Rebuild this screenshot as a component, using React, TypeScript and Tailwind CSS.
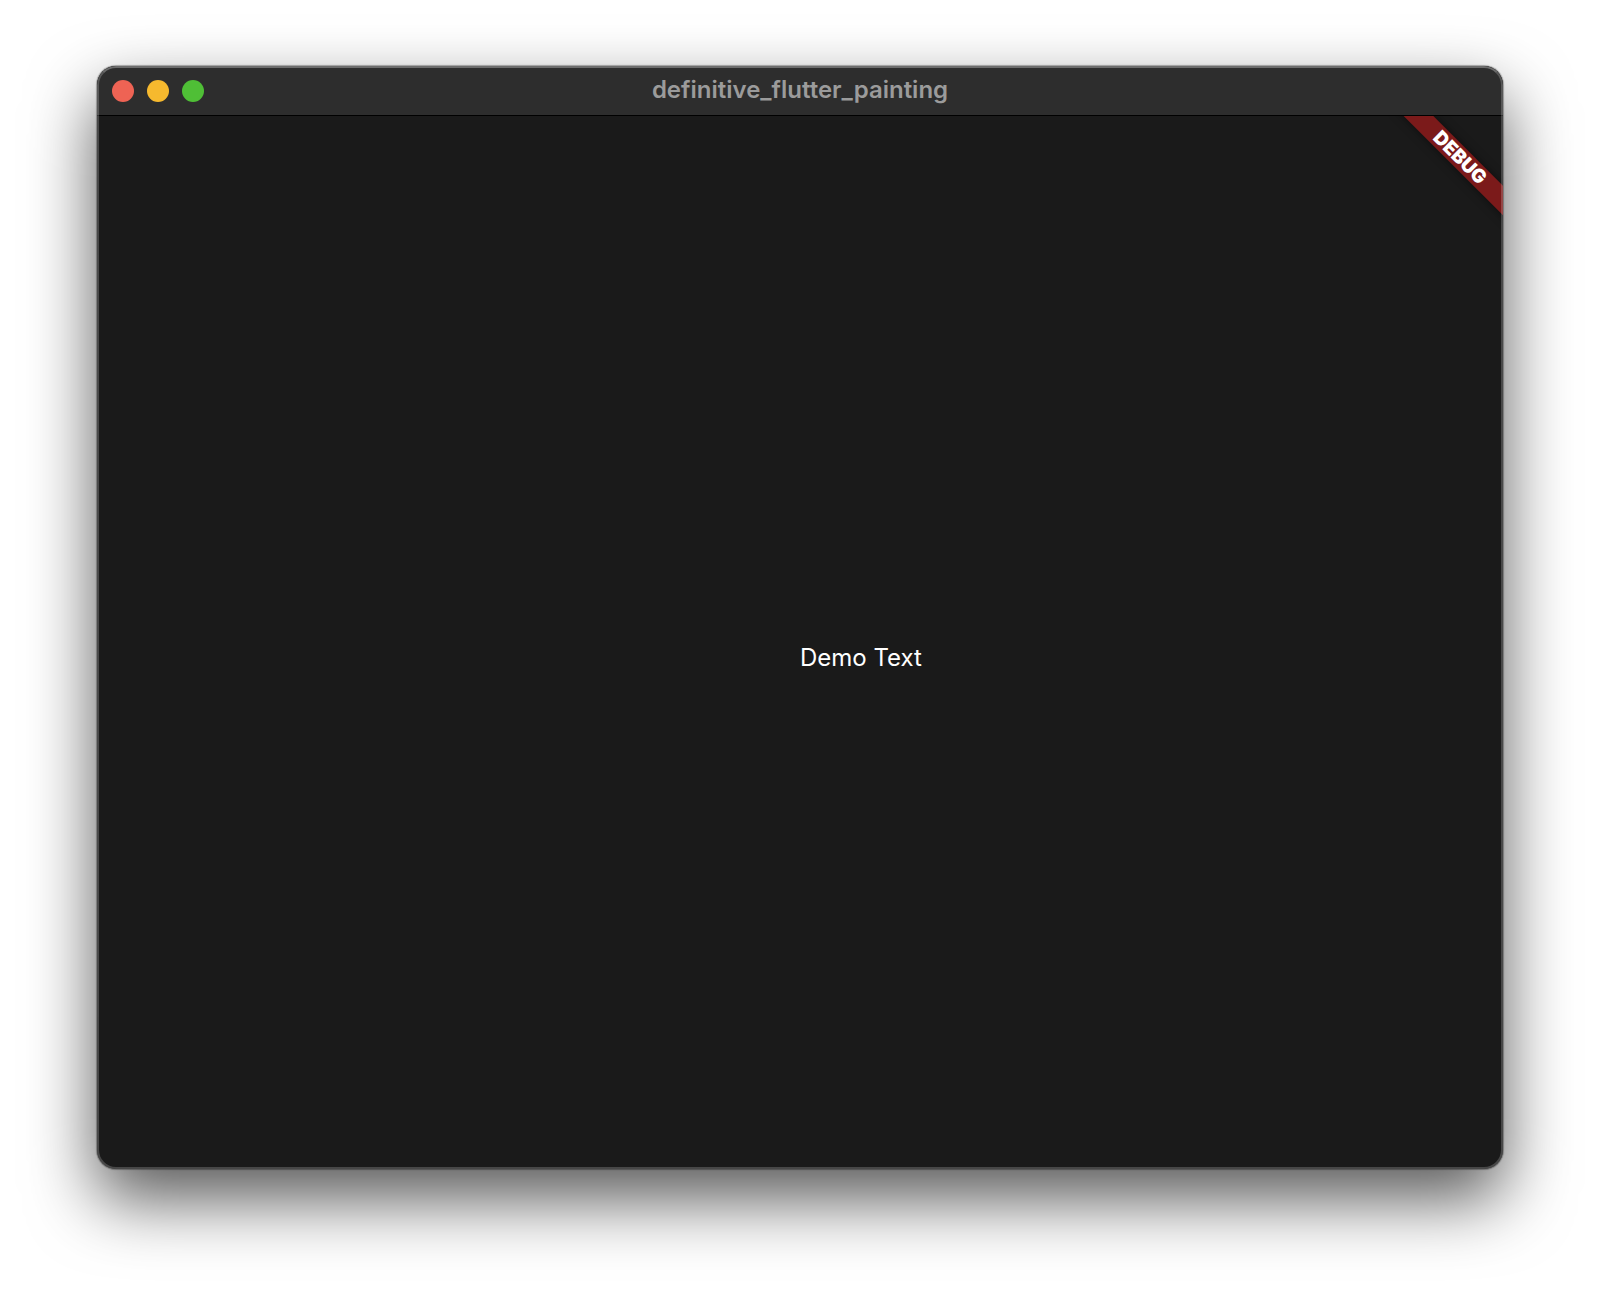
function TitleBar({ title }: { title: string }) {
  return (
    <header className="grid h-[50px] shrink-0 grid-cols-3 items-center border-b border-black bg-[#2d2d2d] px-[15px]">
      <div className="flex gap-[13px]">
        <button type="button" aria-label="Close" className="size-[22px] rounded-full bg-[#ee6354]" />
        <button type="button" aria-label="Minimize" className="size-[22px] rounded-full bg-[#f6b92e]" />
        <button type="button" aria-label="Zoom" className="size-[22px] rounded-full bg-[#4fbf36]" />
      </div>
      <h1 className="pb-0.5 text-center text-[24px] leading-7 font-semibold text-[#9b9b9b]">{title}</h1>
    </header>
  )
}

function DebugBanner() {
  return (
    <div className="absolute top-[31px] right-[-37px] flex h-[21px] w-40 rotate-45 items-center justify-center bg-[#7b1a1a] text-[19px] leading-5 font-black text-white shadow-[0_0_10px_rgba(0,0,0,0.5)]">
      DEBUG
    </div>
  )
}

export default function App() {
  return (
    <div className="flex h-screen flex-col bg-white px-[97px] pt-[66px] pb-[129px] font-['Inter',sans-serif]">
      <div className="relative flex flex-1 flex-col overflow-hidden rounded-[19px] bg-[#1a1a1a] shadow-[0_0_1px_1px_rgba(0,0,0,0.3),0_30px_68px_rgba(0,0,0,0.66)]">
        <TitleBar title="definitive_flutter_painting" />

        {/* Canvas: the text starts at the centre point */}
        <main className="relative grid flex-1 grid-cols-2 grid-rows-2 overflow-hidden">
          <p className="col-start-2 row-start-2 text-[24px] leading-[30px] text-white">Demo Text</p>
          <DebugBanner />
        </main>

        {/* Window edge highlight */}
        <div className="pointer-events-none absolute inset-0 rounded-[19px] border-2 border-white/20 border-t-white/30" />
      </div>
    </div>
  )
}
